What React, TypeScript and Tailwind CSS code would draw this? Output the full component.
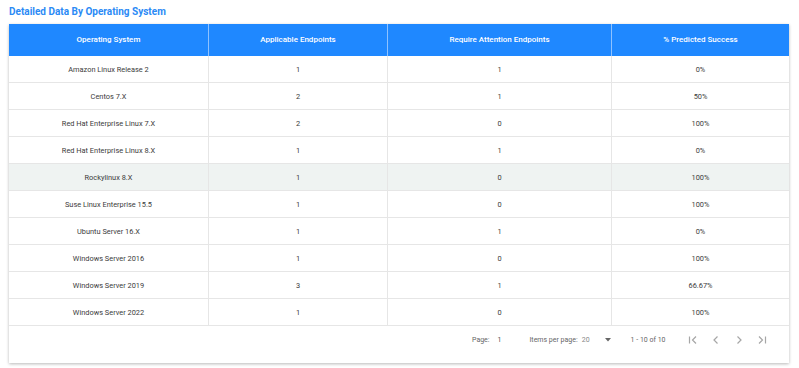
import React from "react";

const rows = [
  ["Amazon Linux Release 2", "1", "1", "0%"],
  ["Centos 7.X", "2", "1", "50%"],
  ["Red Hat Enterprise Linux 7.X", "2", "0", "100%"],
  ["Red Hat Enterprise Linux 8.X", "1", "1", "0%"],
  ["Rockylinux 8.X", "1", "0", "100%"],
  ["Suse Linux Enterprise 15.5", "1", "0", "100%"],
  ["Ubuntu Server 16.X", "1", "1", "0%"],
  ["Windows Server 2016", "1", "0", "100%"],
  ["Windows Server 2019", "3", "1", "66.67%"],
  ["Windows Server 2022", "1", "0", "100%"],
];

const widths = ["w-[200px]", "w-[179px]", "w-[224px]", "flex-1"];
const headers = ["Operating System", "Applicable Endpoints", "Require Attention Endpoints", "% Predicted Success"];

function Icon({ kind }: { kind: "first" | "prev" | "next" | "last" }) {
  return (
    <svg width="12" height="12" viewBox="0 0 12 12" fill="none" stroke="#a6a6a6" strokeWidth="1.2">
      {kind === "first" && (
        <>
          <path d="M2.5 2.5v7" />
          <path d="M9 2.5L5.5 6L9 9.5" />
        </>
      )}
      {kind === "prev" && <path d="M7.5 2.5L4 6L7.5 9.5" />}
      {kind === "next" && <path d="M4.5 2.5L8 6L4.5 9.5" />}
      {kind === "last" && (
        <>
          <path d="M3 2.5L6.5 6L3 9.5" />
          <path d="M9.5 2.5v7" />
        </>
      )}
    </svg>
  );
}

export default function App() {
  return (
    <div className="w-[799px] h-[368px] bg-white pl-[9px] pr-[10px] pt-[5px]" style={{ fontFamily: "Roboto, 'Noto Sans', sans-serif" }}>
      <div className="h-[14px] leading-[14px] text-[10px] font-bold text-[#2b8af5]">Detailed Data By Operating System</div>
      <div className="mt-[5px] w-[780px] bg-white shadow-[0_1px_3px_rgba(0,0,0,0.28)]">
        <div className="flex h-[32px] bg-[#1f88ff] text-white text-[8px] font-medium">
          {headers.map((h, i) => (
            <div
              key={h}
              className={`${widths[i]} flex items-center justify-center ${i < 3 ? "border-r border-[#8fc2ff]" : ""}`}
            >
              {h}
            </div>
          ))}
        </div>
        {rows.map((r, ri) => (
          <div
            key={r[0]}
            className={`flex h-[27px] border-b border-[#e6e6e6] text-[7.4px] text-[#3b3b3b] ${ri === 4 ? "bg-[#eff3f2]" : "bg-white"}`}
          >
            {r.map((c, i) => (
              <div
                key={i}
                className={`${widths[i]} flex items-center justify-center pt-[1px] ${i < 3 ? "border-r border-[#e6e6e6]" : ""}`}
              >
                {c}
              </div>
            ))}
          </div>
        ))}
        <div className="h-[37px] flex items-start pt-[8px] text-[7px] text-[#666]">
          <div className="flex items-center h-[12px] ml-[463px]">
            <span>Page:</span>
            <span className="ml-[8px] text-[#555]">1</span>
          </div>
          <div className="flex items-center h-[12px] ml-[28px]">
            <span>Items per page:</span>
            <span className="ml-[4px] text-[#888]">20</span>
            <svg className="ml-[15px]" width="6" height="4" viewBox="0 0 6 4">
              <path d="M0 0h6L3 3.5z" fill="#666" />
            </svg>
          </div>
          <div className="flex items-center h-[12px] ml-[20px]">1 - 10 of 10</div>
          <div className="flex items-center h-[12px] ml-[21px] gap-[11px]">
            <Icon kind="first" />
            <Icon kind="prev" />
            <Icon kind="next" />
            <Icon kind="last" />
          </div>
        </div>
      </div>
    </div>
  );
}
